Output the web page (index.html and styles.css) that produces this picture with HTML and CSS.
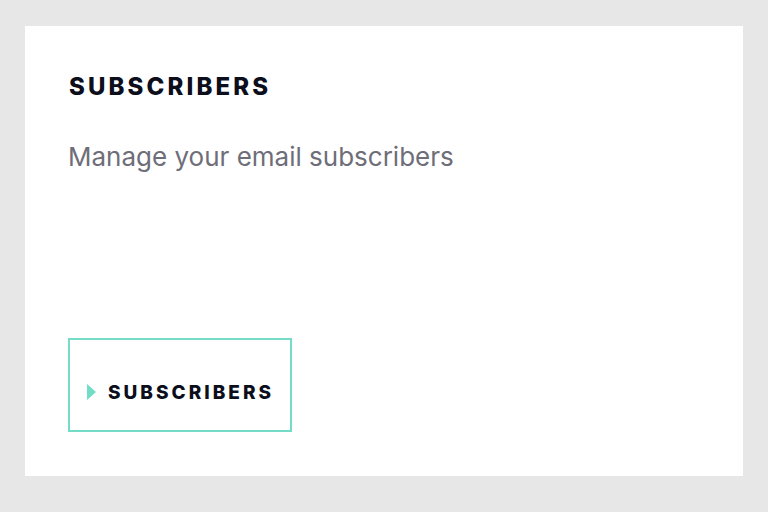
FILE: index.html
```html
<!DOCTYPE html>
<html>
<head>
<meta charset="utf-8">
<link rel="stylesheet" href="styles.css">
</head>
<body>
<div class="card">
  <h2 class="title">SUBSCRIBERS</h2>
  <p class="desc">Manage your email subscribers</p>
  <a class="btn" href="#">
    <svg class="arrow" width="9" height="16" viewBox="0 0 9 16"><polygon points="0,0 9,8 0,16" fill="#72dcc6"/></svg>
    <span class="btn-label">SUBSCRIBERS</span>
  </a>
</div>
</body>
</html>
```
FILE: styles.css
```css
html, body { margin: 0; padding: 0; }
body {
  background: #e7e7e7;
  padding: 26px 25px;
  font-family: Inter, "Noto Sans", sans-serif;
}
.card {
  background: #fff;
  width: 718px;
  height: 450px;
  box-sizing: border-box;
  padding: 43px 43px 44px;
  display: flex;
  flex-direction: column;
  align-items: flex-start;
}
.title {
  margin: 3px 0 0 1px;
  font-size: 24px;
  line-height: 30px;
  font-weight: 800;
  letter-spacing: 3.1px;
  color: #0c0e1c;
}
.desc {
  margin: 40px 0 0 0;
  font-size: 26px;
  line-height: 30px;
  font-weight: 400;
  color: #6e6e79;
}
.btn {
  margin-top: auto;
  box-sizing: border-box;
  width: 224px;
  height: 94px;
  border: 2px solid #72dcc6;
  display: flex;
  align-items: center;
  padding: 14px 0 0 17px;
  gap: 12px;
  text-decoration: none;
  color: #0c0e1c;
}
.btn-label {
  font-size: 19px;
  line-height: 19px;
  font-weight: 800;
  letter-spacing: 3px;
}
.arrow { display: block; }
```
